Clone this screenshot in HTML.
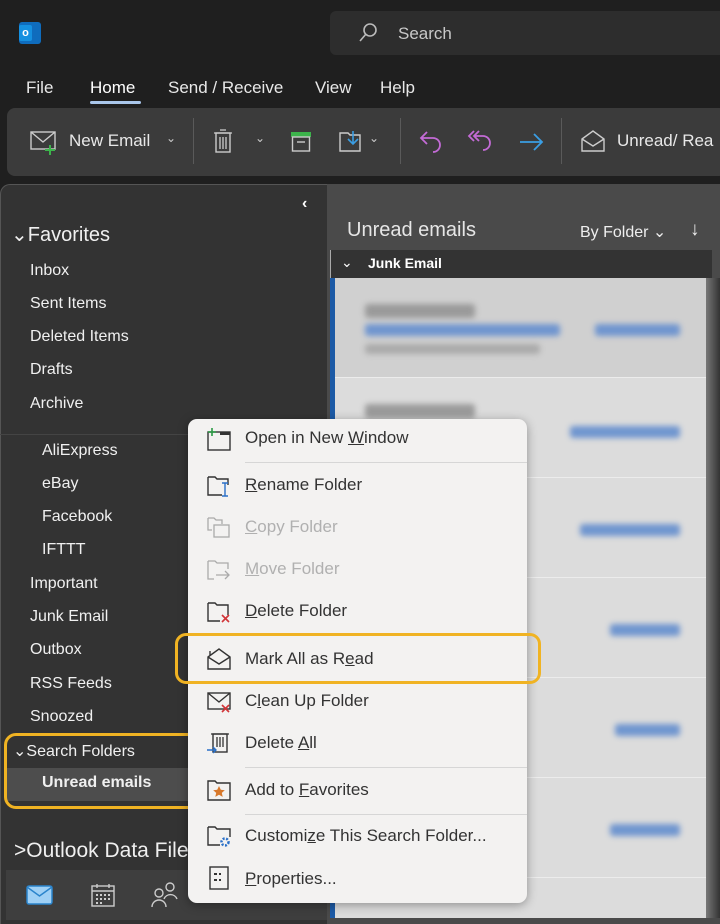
<!DOCTYPE html>
<html><head><meta charset="utf-8"><style>
*{box-sizing:border-box;margin:0;padding:0}
body{width:720px;height:916px;overflow:hidden;background:#1f1f1f;font-family:"Liberation Sans",sans-serif;position:relative;color:#e8e8e8}
.a{position:absolute}
.t{position:absolute;white-space:nowrap}
.f{font-size:16px;color:#f0f0f0}
.mi{position:absolute;left:57px;font-size:17px;color:#333;white-space:nowrap}
.mi.d{color:#b0b0b0}
.ic{position:absolute;left:18px}
.sep{position:absolute;left:57px;right:0;height:1px;background:#d6d6d6}
.row{position:absolute;left:0;right:0;height:100px;border-bottom:1px solid #ececec}
.bl{position:absolute;filter:blur(3px);border-radius:3px}
</style></head><body>
<div class="a" style="left:19px;top:22px;width:22px;height:22px;background:#0f6cbd;border-radius:3px"></div>
<div class="a" style="left:19px;top:25px;width:13px;height:16px;background:#1590e0;color:#fff;font-size:11px;font-weight:bold;text-align:center;line-height:16px;border-radius:2px">o</div>
<div class="a" style="left:330px;top:11px;width:400px;height:44px;background:#2d2d2d;border-radius:6px"></div>
<svg class="a" style="left:357px;top:22px" width="22" height="22" viewBox="0 0 22 22"><circle cx="13" cy="8" r="6" fill="none" stroke="#bbb" stroke-width="1.6"/><path d="M9 12L3 19" stroke="#bbb" stroke-width="1.6"/></svg>
<div class="t" style="left:398px;top:24px;font-size:17px;color:#c8c8c8">Search</div>
<div class="t" style="left:26px;top:78px;font-size:17px">File</div>
<div class="t" style="left:90px;top:78px;font-size:17px;color:#fff">Home</div>
<div class="a" style="left:90px;top:101px;width:51px;height:3px;background:#a9c6ea;border-radius:2px"></div>
<div class="t" style="left:168px;top:78px;font-size:17px">Send / Receive</div>
<div class="t" style="left:315px;top:78px;font-size:17px">View</div>
<div class="t" style="left:380px;top:78px;font-size:17px">Help</div>
<div class="a" style="left:7px;top:108px;width:720px;height:68px;background:#3b3b3b;border-radius:8px"></div>
<svg class="a" style="left:30px;top:130px" width="28" height="26" viewBox="0 0 28 26"><rect x="1" y="2" width="24" height="17" fill="none" stroke="#ccc" stroke-width="1.4"/><path d="M1 2l12 10 12-10" fill="none" stroke="#ccc" stroke-width="1.4"/><path d="M20 15v10M15 20h10" stroke="#3cb44b" stroke-width="2"/></svg>
<div class="t" style="left:69px;top:131px;font-size:17px">New Email</div>
<div class="t" style="left:166px;top:131px;font-size:12px;color:#ccc">⌄</div>
<div class="a" style="left:193px;top:118px;width:1px;height:46px;background:#5a5a5a"></div>
<svg class="a" style="left:212px;top:128px" width="22" height="26" viewBox="0 0 22 26"><rect x="4" y="5" width="14" height="19" fill="none" stroke="#ccc" stroke-width="1.4"/><path d="M2 5h18M8 2h6M8 9v12M11 9v12M14 9v12" stroke="#ccc" stroke-width="1.3"/></svg>
<div class="t" style="left:255px;top:131px;font-size:12px;color:#ccc">⌄</div>
<svg class="a" style="left:289px;top:130px" width="24" height="24" viewBox="0 0 24 24"><rect x="2" y="2" width="20" height="5" fill="#3cb44b"/><rect x="3.5" y="7" width="17" height="14" fill="none" stroke="#ccc" stroke-width="1.4"/><path d="M8 12h8" stroke="#ccc" stroke-width="1.4"/></svg>
<svg class="a" style="left:338px;top:128px" width="26" height="26" viewBox="0 0 26 26"><path d="M2 5h8l2 2h10v16H2z" fill="none" stroke="#ccc" stroke-width="1.4"/><path d="M15 3v13M10 11l5 5 5-5" fill="none" stroke="#3a9ee4" stroke-width="1.6"/></svg>
<div class="t" style="left:369px;top:131px;font-size:12px;color:#ccc">⌄</div>
<div class="a" style="left:400px;top:118px;width:1px;height:46px;background:#5a5a5a"></div>
<svg class="a" style="left:418px;top:128px" width="28" height="28" viewBox="0 0 28 28"><path d="M9 4L3 10l6 6M3 10h12a7 7 0 0 1 0 14" fill="none" stroke="#c36bd6" stroke-width="1.8"/></svg>
<svg class="a" style="left:466px;top:128px" width="30" height="28" viewBox="0 0 30 28"><path d="M8 3L3 8l5 5M13 3L8 8l5 5M8 8h9a7 7 0 0 1 0 14" fill="none" stroke="#c36bd6" stroke-width="1.8"/></svg>
<svg class="a" style="left:518px;top:131px" width="28" height="22" viewBox="0 0 28 22"><path d="M2 11h22M16 3l8 8-8 8" fill="none" stroke="#3a9ee4" stroke-width="1.8"/></svg>
<div class="a" style="left:561px;top:118px;width:1px;height:46px;background:#5a5a5a"></div>
<svg class="a" style="left:580px;top:129px" width="26" height="24" viewBox="0 0 26 24"><path d="M2 10L13 2l11 8v12H2z M2 10l11 7 11-7" fill="none" stroke="#ccc" stroke-width="1.4"/></svg>
<div class="t" style="left:617px;top:131px;font-size:17px">Unread/ Rea</div>
<div class="a" style="left:0;top:184px;width:330px;height:740px;background:#333;border-top:1px solid #555;border-left:1px solid #555;border-radius:10px 0 0 0"></div>
<div class="t" style="left:302px;top:195px;font-size:16px;color:#fff;font-weight:bold">‹</div>
<div class="t" style="left:11px;top:222px;font-size:20px;color:#f0f0f0">⌄Favorites</div>
<div class="t f" style="left:30px;top:262px">Inbox</div>
<div class="t f" style="left:30px;top:295px">Sent Items</div>
<div class="t f" style="left:30px;top:328px">Deleted Items</div>
<div class="t f" style="left:30px;top:361px">Drafts</div>
<div class="t f" style="left:30px;top:395px">Archive</div>
<div class="a" style="left:0;top:434px;width:330px;height:1px;background:#444"></div>
<div class="t f" style="left:42px;top:442px">AliExpress</div>
<div class="t f" style="left:42px;top:475px">eBay</div>
<div class="t f" style="left:42px;top:508px">Facebook</div>
<div class="t f" style="left:42px;top:541px">IFTTT</div>
<div class="t f" style="left:30px;top:575px">Important</div>
<div class="t f" style="left:30px;top:608px">Junk Email</div>
<div class="t f" style="left:30px;top:641px">Outbox</div>
<div class="t f" style="left:30px;top:675px">RSS Feeds</div>
<div class="t f" style="left:30px;top:708px">Snoozed</div>
<div class="t f" style="left:13px;top:741px">⌄Search Folders</div>
<div class="a" style="left:6px;top:768px;width:190px;height:33px;background:#4d4d4d"></div>
<div class="t f" style="left:42px;top:774px;font-weight:bold">Unread emails</div>
<div class="a" style="left:4px;top:733px;width:200px;height:76px;border:3px solid #f0b323;border-radius:12px"></div>
<div class="t" style="left:14px;top:839px;font-size:21px;color:#f0f0f0">&gt;Outlook Data File</div>
<div class="a" style="left:6px;top:870px;width:324px;height:50px;background:#3e3e3e"></div>
<svg class="a" style="left:26px;top:884px" width="28" height="22" viewBox="0 0 28 22"><rect x="1" y="2" width="25" height="18" rx="2" fill="#9fd0f5" stroke="#2a84cc" stroke-width="1.5"/><path d="M1 3l12.5 9L26 3" fill="none" stroke="#2a84cc" stroke-width="1.5"/></svg>
<svg class="a" style="left:90px;top:882px" width="26" height="26" viewBox="0 0 26 26"><rect x="2" y="4" width="22" height="20" fill="none" stroke="#ccc" stroke-width="1.4"/><path d="M2 9h22M7 2v4M19 2v4" stroke="#ccc" stroke-width="1.4"/><path d="M6 13h2M10 13h2M14 13h2M18 13h2M6 17h2M10 17h2M14 17h2M18 17h2M6 21h2M10 21h2" stroke="#ccc" stroke-width="2"/></svg>
<svg class="a" style="left:150px;top:880px" width="32" height="28" viewBox="0 0 32 28"><circle cx="9" cy="13" r="4" fill="none" stroke="#ccc" stroke-width="1.4"/><path d="M2 27a7 7 0 0 1 14 0" fill="none" stroke="#ccc" stroke-width="1.4"/><circle cx="20" cy="7" r="4" fill="none" stroke="#ccc" stroke-width="1.4"/><path d="M14 19a7 7 0 0 1 13 0" fill="none" stroke="#ccc" stroke-width="1.4"/></svg>
<div class="a" style="left:327px;top:184px;width:400px;height:740px;background:#4a4a4a"></div>
<div class="t" style="left:347px;top:219px;font-size:20px;color:#e6e6e6">Unread emails</div>
<div class="t" style="left:580px;top:222px;font-size:16px;color:#eee">By Folder ⌄</div>
<div class="t" style="left:690px;top:219px;font-size:19px;color:#eee">↓</div>
<div class="a" style="left:330px;top:250px;width:382px;height:28px;background:#333;border-left:1px solid #aaa"></div>
<div class="t" style="left:341px;top:254px;font-size:14px;color:#fff">⌄</div>
<div class="t" style="left:368px;top:255px;font-size:14px;color:#fff;font-weight:bold">Junk Email</div>
<div class="a" style="left:330px;top:278px;width:382px;height:640px;background:#dcdcdc;overflow:hidden">
 <div class="row" style="top:0;background:#d0d0d0"></div>
 <div class="row" style="top:100px"></div>
 <div class="row" style="top:200px"></div>
 <div class="row" style="top:300px"></div>
 <div class="row" style="top:400px"></div>
 <div class="row" style="top:500px"></div>
 <div class="a" style="left:0;top:0;width:5px;height:640px;background:#1c5aa6"></div>
 <div class="bl" style="left:35px;top:26px;width:110px;height:14px;background:#9a9a9a"></div>
 <div class="bl" style="left:35px;top:46px;width:195px;height:12px;background:#6f95cf"></div>
 <div class="bl" style="left:265px;top:46px;width:85px;height:12px;background:#6f95cf"></div>
 <div class="bl" style="left:35px;top:66px;width:175px;height:10px;background:#aaa"></div>
 <div class="bl" style="left:35px;top:126px;width:110px;height:14px;background:#9a9a9a"></div>
 <div class="bl" style="left:240px;top:148px;width:110px;height:12px;background:#6f95cf"></div>
 <div class="bl" style="left:250px;top:246px;width:100px;height:12px;background:#6f95cf"></div>
 <div class="bl" style="left:280px;top:346px;width:70px;height:12px;background:#6f95cf"></div>
 <div class="bl" style="left:285px;top:446px;width:65px;height:12px;background:#6f95cf"></div>
 <div class="bl" style="left:280px;top:546px;width:70px;height:12px;background:#6f95cf"></div>
</div>
<div class="a" style="left:706px;top:278px;width:14px;height:640px;background:linear-gradient(90deg,#777,#333)"></div>
<div class="a" style="left:188px;top:419px;width:339px;height:484px;background:#f3f2f1;border-radius:9px;box-shadow:0 2px 10px rgba(0,0,0,.35)">
 <svg class="ic" style="top:8px" width="26" height="26" viewBox="0 0 26 26"><rect x="2" y="5" width="22" height="18" fill="none" stroke="#333" stroke-width="1.4"/><path d="M14 5h10v3H14z" fill="#333"/><path d="M6 1v8M2 5h8" stroke="#2a9a45" stroke-width="1.6"/></svg>
 <div class="mi" style="top:9px">Open in New <u>W</u>indow</div>
 <div class="sep" style="top:43px"></div>
 <svg class="ic" style="top:54px" width="26" height="26" viewBox="0 0 26 26"><path d="M2 4h7l2 2h11v6M2 4v18h14" fill="none" stroke="#333" stroke-width="1.4"/><path d="M19 10v13M16 10h6M16 23h6" stroke="#2a70c8" stroke-width="1.4"/></svg>
 <div class="mi" style="top:56px"><u>R</u>ename Folder</div>
 <svg class="ic" style="top:96px" width="26" height="26" viewBox="0 0 26 26"><path d="M2 3h6l2 2h6v4M2 3v12h4" fill="none" stroke="#aaa" stroke-width="1.3"/><rect x="8" y="10" width="15" height="12" fill="none" stroke="#aaa" stroke-width="1.3"/></svg>
 <div class="mi d" style="top:98px"><u>C</u>opy Folder</div>
 <svg class="ic" style="top:138px" width="26" height="26" viewBox="0 0 26 26"><path d="M2 4h7l2 2h11v6M2 4v18h6" fill="none" stroke="#aaa" stroke-width="1.3"/><path d="M10 18h13M19 14l4 4-4 4" fill="none" stroke="#aaa" stroke-width="1.3"/></svg>
 <div class="mi d" style="top:140px"><u>M</u>ove Folder</div>
 <svg class="ic" style="top:180px" width="26" height="26" viewBox="0 0 26 26"><path d="M2 4h7l2 2h11v10M2 4v18h12" fill="none" stroke="#333" stroke-width="1.4"/><path d="M16 16l7 7M23 16l-7 7" stroke="#d13438" stroke-width="1.6"/></svg>
 <div class="mi" style="top:182px"><u>D</u>elete Folder</div>
 <svg class="ic" style="top:227px" width="26" height="26" viewBox="0 0 26 26"><path d="M2 11L13 3l11 8v12H2z M2 11l11 7 11-7" fill="none" stroke="#333" stroke-width="1.4"/><path d="M4 9V5" stroke="#333" stroke-width="1.4"/></svg>
 <div class="mi" style="top:230px">Mark All as R<u>e</u>ad</div>
 <svg class="ic" style="top:270px" width="26" height="26" viewBox="0 0 26 26"><rect x="2" y="4" width="22" height="16" fill="none" stroke="#333" stroke-width="1.4"/><path d="M2 4l11 9 11-9" fill="none" stroke="#333" stroke-width="1.4"/><path d="M16 16l7 7M23 16l-7 7" stroke="#d13438" stroke-width="1.6"/></svg>
 <div class="mi" style="top:272px">C<u>l</u>ean Up Folder</div>
 <svg class="ic" style="top:311px" width="26" height="26" viewBox="0 0 26 26"><rect x="7" y="4" width="14" height="18" fill="none" stroke="#333" stroke-width="1.4"/><path d="M5 4h18M11 7v10M14 7v10M17 7v10" stroke="#333" stroke-width="1.3"/><path d="M1 20h9M7 17l3 3-3 3" fill="none" stroke="#2a70c8" stroke-width="1.4"/></svg>
 <div class="mi" style="top:314px">Delete <u>A</u>ll</div>
 <div class="sep" style="top:348px"></div>
 <svg class="ic" style="top:358px" width="26" height="26" viewBox="0 0 26 26"><path d="M2 4h7l2 2h13v17H2z" fill="none" stroke="#333" stroke-width="1.4"/><path d="M13 9l1.8 3.8 4 .4-3 2.7.9 4-3.700-2.1-3.7 2.1.9-4-3-2.7 4-.4z" fill="#d8782a"/></svg>
 <div class="mi" style="top:361px">Add to <u>F</u>avorites</div>
 <div class="sep" style="top:395px"></div>
 <svg class="ic" style="top:404px" width="26" height="26" viewBox="0 0 26 26"><path d="M2 4h7l2 2h13v8M2 4v18h12" fill="none" stroke="#333" stroke-width="1.4"/><circle cx="19" cy="19" r="3.5" fill="none" stroke="#2a70c8" stroke-width="2.5" stroke-dasharray="2 1.5"/></svg>
 <div class="mi" style="top:407px">Customi<u>z</u>e This Search Folder...</div>
 <svg class="ic" style="top:446px" width="26" height="26" viewBox="0 0 26 26"><rect x="4" y="2" width="18" height="22" fill="none" stroke="#333" stroke-width="1.4"/><path d="M8 9h3M8 15h3M13 9h2M13 15h2" stroke="#333" stroke-width="2"/></svg>
 <div class="mi" style="top:450px"><u>P</u>roperties...</div>
</div>
<div class="a" style="left:175px;top:633px;width:366px;height:51px;border:3px solid #f0b323;border-radius:11px"></div>
</body></html>
